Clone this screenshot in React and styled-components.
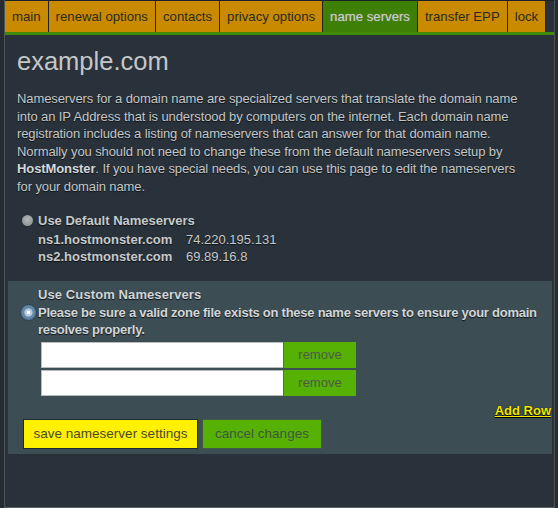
import React from 'react';
import styled, { createGlobalStyle } from 'styled-components';

const GlobalStyle = createGlobalStyle`
  html, body {
    margin: 0;
    background: #252d32;
  }
  body {
    font-family: 'Liberation Sans', Arial, sans-serif;
  }
`;

const Page = styled.div`
  display: flex;
  min-height: 100vh;
  padding: 0 3px 0 4px;
  box-sizing: border-box;
`;
const Frame = styled.div`
  flex: 1;
  display: flex;
  flex-direction: column;
  background: #29323a;
  border-left: 1px solid #4c555a;
  border-right: 1px solid #4c555a;
  border-bottom: 1px solid #5a6267;
`;
const Tabs = styled.div`
  display: flex;
  height: 32px;
  background: #29323a;
  border-top: 1px solid #1b2227;
  box-sizing: border-box;
`;
const Tab = styled.div`
  padding: 0 7px;
  line-height: 31px;
  font-size: 13.2px;
  color: ${p => (p.$active ? '#c9cccd' : '#2a2a22')};
  background: ${p => (p.$active ? '#3e7f05' : '#c98a00')};
  border-right: 1px solid #1d2329;
  text-shadow: ${p => (p.$active ? '0 0 1px #9aa09a' : 'none')};
`;
const Bar = styled.div`
  height: 3px;
  background: #3f8a06;
`;
const Body = styled.div`
  flex: 1;
  display: flex;
  flex-direction: column;
`;
const Title = styled.h1`
  margin: 12px 0 0 12px;
  font-size: 25.5px;
  line-height: 28px;
  font-weight: normal;
  color: #c4c7c8;
`;
const Intro = styled.p`
  margin: 15px 0 0 12px;
  font-size: 13px;
  line-height: 17.6px;
  letter-spacing: -0.1px;
  white-space: nowrap;
  color: #c3c7c9;
  text-shadow: 0 1px 1px rgba(0, 0, 0, 0.7);
  strong { color: #d4d8da; }
`;
const DefaultBlock = styled.div`
  margin: 16px 0 0 17px;
  color: #c6cacc;
  font-size: 13px;
  text-shadow: 0 1px 1px rgba(0, 0, 0, 0.7);
`;
const OptionHead = styled.div`
  display: flex;
  align-items: center;
  gap: 5px;
  line-height: 18px;
  font-weight: bold;
`;
const Radio = styled.span`
  display: block;
  flex: none;
  box-sizing: border-box;
  width: 11px;
  height: 11px;
  border-radius: 50%;
  background: radial-gradient(circle at 50% 40%, #b4b7b8, #85898b);
  box-shadow: 0 0 1px rgba(0, 0, 0, 0.6);
`;
const CheckedRadio = styled.span`
  display: block;
  flex: none;
  box-sizing: border-box;
  width: 17px;
  height: 17px;
  border-radius: 50%;
  border: 1px solid #2f4556;
  background: radial-gradient(circle, #ffffff 0 1.5px, #b8cee0 2px 3.5px, #6b8fac 4.5px, #50758f 8px);
`;
const NsList = styled.div`
  margin: 1px 0 0 16px;
  line-height: 17px;
`;
const NsRow = styled.div`
  display: flex;
  b { width: 148px; }
`;
const Custom = styled.section`
  margin: 16px 2px 0 3px;
  padding: 5px 1px 5px 12px;
  background: #3c4d53;
  color: #d2d6d8;
  font-size: 13px;
  font-weight: bold;
  text-shadow: 0 1px 1px rgba(0, 0, 0, 0.75);
`;
const CustomHead = styled.div`
  padding-left: 18px;
  line-height: 18px;
  letter-spacing: 0.1px;
`;
const CustomRow = styled.div`
  display: flex;
  align-items: flex-start;
  gap: 1px;
  line-height: 17px;
  letter-spacing: -0.25px;
  padding-right: 8px;
`;
const Rows = styled.div`
  margin: 4px 0 0 21px;
  display: flex;
  flex-direction: column;
  gap: 2px;
`;
const InputRow = styled.div`
  display: flex;
  height: 26px;
`;
const Field = styled.input`
  width: 242px;
  box-sizing: border-box;
  border: 1px solid #b7bcbd;
  border-right: none;
  background: #ffffff;
  margin: 0;
  outline: 0;
`;
const Remove = styled.div`
  width: 72px;
  background: #55b103;
  color: #4e5a48;
  font-weight: normal;
  text-shadow: none;
  text-align: center;
  line-height: 26px;
  border-left: 1px solid #467f1c;
`;
const AddRow = styled.div`
  display: flex;
  justify-content: flex-end;
  margin-top: 7px;
  line-height: 16px;
  a {
    color: #f4e800;
    text-decoration: underline;
    text-shadow: 0 1px 1px #000, 0 0 1px #000;
  }
`;
const Actions = styled.div`
  display: flex;
  gap: 4px;
  margin: 0 0 0 3px;
`;
const Button = styled.button`
  height: 30px;
  width: ${p => p.$width}px;
  border: 1px solid ${p => (p.$primary ? '#1c2b38' : '#3e5a47')};
  background: ${p => (p.$primary ? '#fff100' : '#56b103')};
  color: ${p => (p.$primary ? '#4b4a30' : '#41573f')};
  font-family: 'Liberation Sans', Arial, sans-serif;
  font-size: 13.5px;
  padding: 0;
`;

const tabs = ['main', 'renewal options', 'contacts', 'privacy options', 'name servers', 'transfer EPP', 'lock'];

const App = () => (
  <Page>
    <GlobalStyle />
    <Frame>
      <Tabs>
        {tabs.map(t => (
          <Tab key={t} $active={t === 'name servers'}>{t}</Tab>
        ))}
      </Tabs>
      <Bar />
      <Body>
        <Title>example.com</Title>
        <Intro>
          Nameservers for a domain name are specialized servers that translate the domain name<br />
          into an IP Address that is understood by computers on the internet. Each domain name<br />
          registration includes a listing of nameservers that can answer for that domain name.<br />
          Normally you should not need to change these from the default nameservers setup by<br />
          <strong>HostMonster</strong>. If you have special needs, you can use this page to edit the nameservers<br />
          for your domain name.
        </Intro>
        <DefaultBlock>
          <OptionHead>
            <Radio />
            Use Default Nameservers
          </OptionHead>
          <NsList>
            <NsRow><b>ns1.hostmonster.com</b>74.220.195.131</NsRow>
            <NsRow><b>ns2.hostmonster.com</b>69.89.16.8</NsRow>
          </NsList>
        </DefaultBlock>
        <Custom>
          <CustomHead>Use Custom Nameservers</CustomHead>
          <CustomRow>
            <CheckedRadio />
            <span>Please be sure a valid zone file exists on these name servers to ensure your domain resolves properly.</span>
          </CustomRow>
          <Rows>
            <InputRow><Field /><Remove>remove</Remove></InputRow>
            <InputRow><Field /><Remove>remove</Remove></InputRow>
          </Rows>
          <AddRow><a>Add Row</a></AddRow>
          <Actions>
            <Button $primary $width={175}>save nameserver settings</Button>
            <Button $width={120}>cancel changes</Button>
          </Actions>
        </Custom>
      </Body>
    </Frame>
  </Page>
);

export default App;
